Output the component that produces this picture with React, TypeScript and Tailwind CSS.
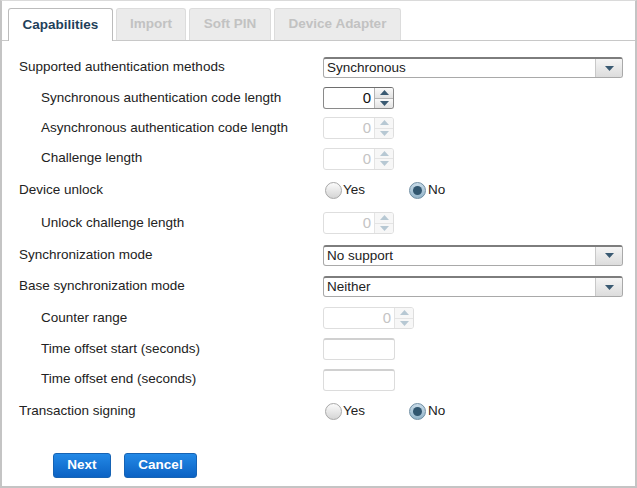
import React from 'react';

const font = { fontFamily: '"Liberation Sans", Arial, sans-serif' };

const Caret = ({ up = false, disabled = false }: { up?: boolean; disabled?: boolean }) => (
  <svg width="9" height="5" viewBox="0 0 9 5" className="block">
    <path d={up ? 'M0 5 L4.5 0 L9 5 Z' : 'M0 0 L9 0 L4.5 5 Z'} fill={disabled ? '#b7c8d3' : '#3a5a72'} />
  </svg>
);

const Select = ({ value }: { value: string }) => (
  <div className="flex w-[300px] h-[21px] rounded-[3px] border border-[#a9a9a9] border-t-[#7d7d7d] border-t-2 bg-white overflow-hidden">
    <div className="flex-1 px-[3px] text-[13.5px] leading-[17px] text-[#222]">{value}</div>
    <div className="w-[27px] flex items-center justify-center border-l border-[#c8c8c8] bg-gradient-to-b from-[#f5f5f5] to-[#dcdcdc]">
      <Caret />
    </div>
  </div>
);

const Spinner = ({ disabled = false, wide = false }: { disabled?: boolean; wide?: boolean }) => (
  <div
    className={`flex h-[22px] rounded-[3px] border overflow-hidden bg-white ${wide ? 'w-[91px]' : 'w-[71px]'} ${
      disabled ? 'border-[#dedede]' : 'border-[#8a8a8a] border-t-[#6e6e6e]'
    }`}
  >
    <div className={`flex-1 text-right pr-[3px] text-[15px] leading-[20px] ${disabled ? 'text-[#c4c4c4]' : 'text-[#111]'}`}>0</div>
    <div className={`w-[19px] flex flex-col border-l ${disabled ? 'border-[#e4e4e4]' : 'border-[#b5b5b5]'}`}>
      <div className={`flex-1 flex items-center justify-center ${disabled ? 'bg-[#f7f7f7]' : 'bg-gradient-to-b from-[#fafafa] to-[#e2e2e2]'}`}>
        <Caret up disabled={disabled} />
      </div>
      <div className={`flex-1 flex items-center justify-center border-t ${disabled ? 'border-[#e4e4e4] bg-[#f7f7f7]' : 'border-[#b5b5b5] bg-gradient-to-b from-[#fafafa] to-[#e2e2e2]'}`}>
        <Caret disabled={disabled} />
      </div>
    </div>
  </div>
);

const TextBox = () => (
  <div className="w-[72px] h-[22px] rounded-[3px] border border-[#dcdcdc] border-t-[#d0d0d0] border-t-2 bg-white" />
);

const Radio = ({ checked = false }: { checked?: boolean }) =>
  checked ? (
    <span className="w-[17px] h-[17px] rounded-full border border-[#6f8ea3] bg-gradient-to-b from-[#c8dbe8] to-[#93b4c9] flex items-center justify-center">
      <span className="w-[9px] h-[9px] rounded-full bg-[#31566f]" />
    </span>
  ) : (
    <span className="w-[17px] h-[17px] rounded-full border border-[#a8a8a8] bg-gradient-to-b from-[#fbfbfb] to-[#d5d5d5]" />
  );

const YesNo = () => (
  <div className="flex items-center text-[13.5px] text-[#222]">
    <div className="flex items-center w-[84px] ml-[2px]">
      <Radio />
      <span className="ml-[1px]">Yes</span>
    </div>
    <div className="flex items-center">
      <Radio checked />
      <span className="ml-[2px]">No</span>
    </div>
  </div>
);

const rows: { label: string; indent?: boolean; h: string; control: React.ReactNode }[] = [
  { label: 'Supported authentication methods', h: 'h-[31px]', control: <Select value="Synchronous" /> },
  { label: 'Synchronous authentication code length', indent: true, h: 'h-[30px]', control: <Spinner /> },
  { label: 'Asynchronous authentication code length', indent: true, h: 'h-[30px]', control: <Spinner disabled /> },
  { label: 'Challenge length', indent: true, h: 'h-[31px]', control: <Spinner disabled /> },
  { label: 'Device unlock', h: 'h-[33px]', control: <YesNo /> },
  { label: 'Unlock challenge length', indent: true, h: 'h-[32px]', control: <Spinner disabled /> },
  { label: 'Synchronization mode', h: 'h-[32px]', control: <Select value="No support" /> },
  { label: 'Base synchronization mode', h: 'h-[31px]', control: <Select value="Neither" /> },
  { label: 'Counter range', indent: true, h: 'h-[32px]', control: <Spinner disabled wide /> },
  { label: 'Time offset start (seconds)', indent: true, h: 'h-[30px]', control: <TextBox /> },
  { label: 'Time offset end (seconds)', indent: true, h: 'h-[31px]', control: <TextBox /> },
  { label: 'Transaction signing', h: 'h-[33px]', control: <YesNo /> },
];

const tabOff =
  'h-[32px] bg-[#ebebeb] border border-b-0 border-[#dcdcdc] rounded-t-[3px] flex items-center justify-center text-[13.5px] font-bold text-[#c2c2c2]';

export default function App() {
  return (
    <div className="w-[637px] h-[488px] bg-white border-2 border-[#c4c4c4] border-t border-t-[#dadada] flex flex-col" style={font}>
      {/* Tabs */}
      <div className="flex items-end gap-[3px] pl-[6px] pt-[7px] border-b border-[#c8c8c8] h-[40px]">
        <div className="h-[33px] w-[105px] -mb-px bg-white border border-b-0 border-[#bcbcbc] rounded-t-[3px] flex items-center justify-center text-[13.5px] font-bold text-[#1f3f5a]">
          Capabilities
        </div>
        <div className={`${tabOff} w-[70px]`}>Import</div>
        <div className={`${tabOff} w-[82px]`}>Soft PIN</div>
        <div className={`${tabOff} w-[127px]`}>Device Adapter</div>
      </div>

      {/* Form */}
      <div className="pt-[11px] flex flex-col">
        {rows.map((r) => (
          <div key={r.label} className={`flex items-center ${r.h}`}>
            <div className={`w-[321px] text-[13.5px] text-[#222] ${r.indent ? 'pl-[39px]' : 'pl-[17px]'}`}>{r.label}</div>
            {r.control}
          </div>
        ))}
      </div>

      {/* Buttons */}
      <div className="flex gap-[13px] pl-[51px] pt-[25px]">
        <button className="w-[58px] h-[25px] rounded-[3px] border border-[#1663b4] bg-gradient-to-b from-[#2389e6] to-[#0b62c4] text-white text-[13.5px] font-bold">
          Next
        </button>
        <button className="w-[73px] h-[25px] rounded-[3px] border border-[#1663b4] bg-gradient-to-b from-[#2389e6] to-[#0b62c4] text-white text-[13.5px] font-bold">
          Cancel
        </button>
      </div>
    </div>
  );
}
